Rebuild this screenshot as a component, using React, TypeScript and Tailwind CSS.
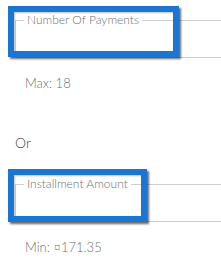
export default function App() {
  return (
    <div className="relative w-[221px] h-[275px] overflow-hidden bg-white font-['Lato','Liberation_Sans',sans-serif] font-light">
      <div className="flex flex-col pt-[12px] pl-[15px]">
        <PaymentField label="Number Of Payments" />
        <p className="mt-[17px] pl-[10px] text-[13px] leading-[16px] text-[#6f6f6f]">Max: 18</p>

        <p className="mt-[43px] text-[14px] leading-[17px] text-[#444444]">Or</p>

        <div className="mt-[25px]">
          <PaymentField label="Installment Amount" />
        </div>
        <p className="mt-[17px] pl-[10px] text-[13px] leading-[16px] text-[#6f6f6f]">Min: ¤171.35</p>
      </div>

      {/* highlight boxes drawn over the inputs */}
      <div className="absolute left-[8px] top-[6px] w-[171px] h-[51px] border-[6px] border-[#1976d2] shadow-[2px_2px_2px_rgba(0,0,0,0.6),inset_1px_1px_2px_rgba(0,0,0,0.25)]" />
      <div className="absolute left-[8px] top-[169px] w-[139px] h-[53px] border-[6px] border-[#1976d2] shadow-[2px_2px_2px_rgba(0,0,0,0.6),inset_1px_1px_2px_rgba(0,0,0,0.25)]" />
    </div>
  );
}

function PaymentField({ label }: { label: string }) {
  return (
    <fieldset className="w-[260px] h-[46px] border border-[#cfcfcf] pl-[8px]">
      <legend className="px-[3px] text-[12px] leading-[16px] text-[#6f6f6f]">{label}</legend>
    </fieldset>
  );
}
